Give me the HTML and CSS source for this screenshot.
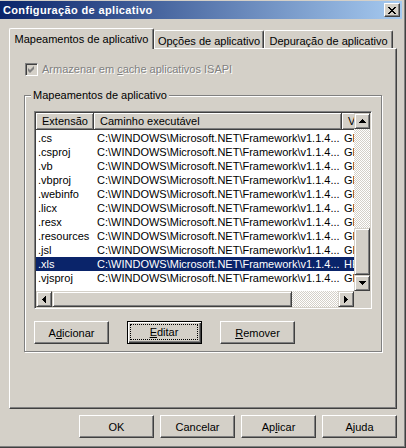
FILE: index.html
```html
<!DOCTYPE html>
<html lang="pt">
<head>
<meta charset="utf-8">
<title>Configuração de aplicativo</title>
<link rel="stylesheet" href="styles.css">
</head>
<body>
<div class="window">
  <div class="titlebar">
    <span class="title">Configuração de aplicativo</span>
    <span class="close"><svg width="8" height="7" viewBox="0 0 8 7"><path d="M0 0h2v1H0zM6 0h2v1H6zM1 1h2v1H1zM5 1h2v1H5zM2 2h4v1H2zM3 3h2v1H3zM2 4h4v1H2zM1 5h2v1H1zM5 5h2v1H5zM0 6h2v1H0zM6 6h2v1H6z" fill="#000"/></svg></span>
  </div>
  <div class="client">
    <div class="tabs">
      <div class="tab tab-1 active">Mapeamentos de aplicativo</div>
      <div class="tab tab-2">Opções de aplicativo</div>
      <div class="tab tab-3">Depuração de aplicativo</div>
    </div>
    <div class="panel">
      <div class="check disabled">
        <span class="cb"><svg width="7" height="7" viewBox="0 0 7 7"><path d="M6 0v3L2 7 0 5V2l2 2z" fill="#808080"/></svg></span>
        <span class="check-label">Armazenar em <u>c</u>ache aplicativos ISAPI</span>
      </div>
      <fieldset class="group">
        <legend>Mapeamentos de aplicativo</legend>
        <div class="list">
          <div class="list-main">
            <div class="list-area">
              <div class="header">
                <div class="hcell c1">Extensão</div>
                <div class="hcell c2">Caminho executável</div>
                <div class="hcell c3">Verbos</div>
              </div>
              <div class="rows">
                <div class="row"><span class="cell c1">.cs</span><span class="cell c2">C:\WINDOWS\Microsoft.NET\Framework\v1.1.4...</span><span class="cell c3">GET,HEAD,POST,DEBUG</span></div>
                <div class="row"><span class="cell c1">.csproj</span><span class="cell c2">C:\WINDOWS\Microsoft.NET\Framework\v1.1.4...</span><span class="cell c3">GET,HEAD,POST,DEBUG</span></div>
                <div class="row"><span class="cell c1">.vb</span><span class="cell c2">C:\WINDOWS\Microsoft.NET\Framework\v1.1.4...</span><span class="cell c3">GET,HEAD,POST,DEBUG</span></div>
                <div class="row"><span class="cell c1">.vbproj</span><span class="cell c2">C:\WINDOWS\Microsoft.NET\Framework\v1.1.4...</span><span class="cell c3">GET,HEAD,POST,DEBUG</span></div>
                <div class="row"><span class="cell c1">.webinfo</span><span class="cell c2">C:\WINDOWS\Microsoft.NET\Framework\v1.1.4...</span><span class="cell c3">GET,HEAD,POST,DEBUG</span></div>
                <div class="row"><span class="cell c1">.licx</span><span class="cell c2">C:\WINDOWS\Microsoft.NET\Framework\v1.1.4...</span><span class="cell c3">GET,HEAD,POST,DEBUG</span></div>
                <div class="row"><span class="cell c1">.resx</span><span class="cell c2">C:\WINDOWS\Microsoft.NET\Framework\v1.1.4...</span><span class="cell c3">GET,HEAD,POST,DEBUG</span></div>
                <div class="row"><span class="cell c1">.resources</span><span class="cell c2">C:\WINDOWS\Microsoft.NET\Framework\v1.1.4...</span><span class="cell c3">GET,HEAD,POST,DEBUG</span></div>
                <div class="row"><span class="cell c1">.jsl</span><span class="cell c2">C:\WINDOWS\Microsoft.NET\Framework\v1.1.4...</span><span class="cell c3">GET,HEAD,POST,DEBUG</span></div>
                <div class="row sel"><span class="cell c1">.xls</span><span class="cell c2">C:\WINDOWS\Microsoft.NET\Framework\v1.1.4...</span><span class="cell c3">HEAD,GET,POST</span></div>
                <div class="row"><span class="cell c1">.vjsproj</span><span class="cell c2">C:\WINDOWS\Microsoft.NET\Framework\v1.1.4...</span><span class="cell c3">GET,HEAD,POST,DEBUG</span></div>
              </div>
            </div>
            <div class="vscroll">
              <span class="sbtn"><svg width="7" height="4" viewBox="0 0 7 4"><path d="M3 0h1v1h1v1h1v1h1v1H0V3h1V2h1V1h1z" fill="#000"/></svg></span>
              <span class="vtrack"></span>
              <span class="thumb vthumb"></span>
              <span class="sbtn"><svg width="7" height="4" viewBox="0 0 7 4"><path d="M0 0h7v1H6v1H5v1H4v1H3V3H2V2H1V1H0z" fill="#000"/></svg></span>
            </div>
          </div>
          <div class="hscroll-row">
            <div class="hscroll">
              <span class="sbtn"><svg width="4" height="7" viewBox="0 0 4 7"><path d="M3 0h1v7H3V6H2V5H1V4H0V3h1V2h1V1h1z" fill="#000"/></svg></span>
              <span class="thumb hthumb"></span>
              <span class="htrack"></span>
              <span class="sbtn"><svg width="4" height="7" viewBox="0 0 4 7"><path d="M0 0h1v1h1v1h1v1h1v1H3v1H2v1H1v1H0z" fill="#000"/></svg></span>
            </div>
            <div class="corner"></div>
          </div>
        </div>
        <div class="group-buttons">
          <button class="btn">A<u>d</u>icionar</button>
          <button class="btn default"><span class="focus"><u>E</u>ditar</span></button>
          <button class="btn"><u>R</u>emover</button>
        </div>
      </fieldset>
    </div>
    <div class="dialog-buttons">
      <button class="btn">OK</button>
      <button class="btn">Cancelar</button>
      <button class="btn">Ap<u>l</u>icar</button>
      <button class="btn">Ajuda</button>
    </div>
  </div>
</div>
</body>
</html>
```

FILE: styles.css
```css
html, body {
  margin: 0;
  padding: 0;
}
body {
  width: 406px;
  height: 448px;
  overflow: hidden;
  background: #d4d0c8;
  font-family: "Liberation Sans", Arial, sans-serif;
  font-size: 11px;
  color: #000;
}
u {
  text-decoration: underline;
  text-underline-offset: 1px;
}

.window {
  box-sizing: border-box;
  height: 448px;
  padding: 1px 3px 0 0;
  border-right: 1px solid #404040;
  border-bottom: 1px solid #404040;
  box-shadow: inset -1px -1px 0 #808080;
  display: flex;
  flex-direction: column;
}

.titlebar {
  height: 18px;
  flex: none;
  background: linear-gradient(to right, #0a246a, #a6caf0);
  display: flex;
  align-items: center;
  justify-content: space-between;
  padding: 0 2px 0 3px;
}
.title {
  color: #fff;
  font-weight: bold;
  letter-spacing: 0.35px;
  white-space: nowrap;
}
.close {
  width: 16px;
  height: 14px;
  box-sizing: border-box;
  background: #d4d0c8;
  border: 1px solid;
  border-color: #fff #404040 #404040 #fff;
  box-shadow: inset -1px -1px 0 #808080;
  display: flex;
  align-items: center;
  justify-content: center;
}
.close svg { display: block; }

.client {
  padding: 9px 5px 0 9px;
}

.tabs {
  display: flex;
  align-items: flex-end;
  height: 20px;
}
.tab {
  box-sizing: border-box;
  height: 18px;
  padding-top: 4px;
  line-height: 13px;
  text-align: center;
  white-space: nowrap;
  background: #d4d0c8;
  border-top: 1px solid #fff;
  border-left: 1px solid #fff;
  border-right: 1px solid #404040;
  box-shadow: inset -1px 0 0 #808080;
  border-radius: 2px 2px 0 0;
}
.tab.active {
  height: 21px;
  margin-bottom: -1px;
  position: relative;
  z-index: 1;
}
.tab-1 { width: 145px; }
.tab-2 { width: 110px; }
.tab-3 { width: 129px; }

.panel {
  box-sizing: border-box;
  height: 361px;
  border-top: 1px solid #fff;
  border-left: 1px solid #fff;
  border-right: 1px solid #404040;
  border-bottom: 1px solid #404040;
  box-shadow: inset -1px -1px 0 #808080;
  padding: 14px 0 0 14px;
}

.check {
  display: flex;
  align-items: center;
  height: 13px;
  margin-left: 1px;
}
.cb {
  width: 13px;
  height: 13px;
  box-sizing: border-box;
  border: 1px solid;
  border-color: #808080 #fff #fff #808080;
  box-shadow: inset 1px 1px 0 #404040, inset -1px -1px 0 #d4d0c8;
  background: #d4d0c8;
  display: flex;
  align-items: center;
  justify-content: center;
}
.cb svg { display: block; }
.check-label {
  margin-left: 4px;
  line-height: 13px;
  white-space: nowrap;
}
.disabled .check-label {
  color: #808080;
  text-shadow: 1px 1px 0 #fff;
}

.group {
  box-sizing: border-box;
  width: 358px;
  margin: 13px 0 0 0;
  padding: 9px 9px 7px 9px;
  min-width: 0;
  border: 1px solid #808080;
  box-shadow: inset 1px 1px 0 #fff, 1px 1px 0 #fff;
}
.group legend {
  padding: 0 2px;
  margin-left: -3px;
  line-height: 13px;
  background: #d4d0c8;
}

.list {
  box-sizing: border-box;
  width: 338px;
  height: 198px;
  border: 1px solid;
  border-color: #808080 #fff #fff #808080;
  box-shadow: inset 1px 1px 0 #404040, inset -1px -1px 0 #d4d0c8;
  background: #fff;
  padding: 1px;
  display: flex;
  flex-direction: column;
}
.list-main {
  display: flex;
  height: 178px;
}
.list-area {
  width: 318px;
  overflow: hidden;
  background: #fff;
}
.header {
  display: flex;
  height: 17px;
}
.hcell {
  flex: none;
  box-sizing: border-box;
  height: 17px;
  background: #d4d0c8;
  border-right: 1px solid #404040;
  border-bottom: 1px solid #404040;
  box-shadow: inset 1px 1px 0 #fff, inset -1px -1px 0 #808080;
  padding-left: 6px;
  line-height: 16px;
  white-space: nowrap;
  overflow: hidden;
}
.c1 { width: 58px; }
.c2 { width: 248px; }
.c3 { width: 100px; }

.rows {
  padding-top: 1px;
}
.row {
  display: flex;
  height: 14px;
  line-height: 14px;
  white-space: nowrap;
}
.row.sel {
  background: #0a246a;
  color: #fff;
}
.cell {
  flex: none;
  box-sizing: border-box;
  overflow: hidden;
}
.cell.c1 { padding-left: 2px; }
.cell.c2 { padding-left: 3px; }
.cell.c3 { padding-left: 2px; }

.sbtn, .thumb {
  box-sizing: border-box;
  background: #d4d0c8;
  border: 1px solid;
  border-color: #d4d0c8 #404040 #404040 #d4d0c8;
  box-shadow: inset 1px 1px 0 #fff, inset -1px -1px 0 #808080;
  display: flex;
  align-items: center;
  justify-content: center;
  flex: none;
}
.sbtn { width: 16px; height: 16px; }
.sbtn svg { display: block; }
.vscroll {
  width: 16px;
  display: flex;
  flex-direction: column;
}
.vtrack, .htrack {
  flex: none;
  background: repeating-conic-gradient(#d4d0c8 0 25%, #ffffff 0 50%) 0 0 / 2px 2px;
}
.vtrack { height: 99px; }
.vthumb { height: 47px; width: 16px; }

.hscroll-row {
  display: flex;
  height: 16px;
}
.hscroll {
  display: flex;
  width: 318px;
}
.hthumb { width: 240px; height: 16px; }
.htrack { width: 46px; height: 16px; }
.corner {
  width: 16px;
  height: 16px;
  background: #d4d0c8;
}

.btn {
  width: 75px;
  height: 23px;
  box-sizing: border-box;
  margin: 0;
  padding: 0;
  background: #d4d0c8;
  border: 1px solid;
  border-color: #fff #404040 #404040 #fff;
  box-shadow: inset -1px -1px 0 #808080;
  font-family: inherit;
  font-size: 11px;
  color: #000;
  display: flex;
  align-items: center;
  justify-content: center;
  flex: none;
}
.btn.default {
  border: 1px solid #000;
  box-shadow: inset 1px 1px 0 #fff, inset -1px -1px 0 #404040, inset -2px -2px 0 #808080;
  align-items: stretch;
}
.focus {
  flex: 1;
  margin: 2px 3px 3px 2px;
  border: 1px dotted #000;
  display: flex;
  align-items: center;
  justify-content: center;
}

.group-buttons {
  display: flex;
  gap: 18px;
  margin-top: 12px;
}

.dialog-buttons {
  display: flex;
  justify-content: flex-end;
  gap: 6px;
  margin-top: 6px;
}
```
